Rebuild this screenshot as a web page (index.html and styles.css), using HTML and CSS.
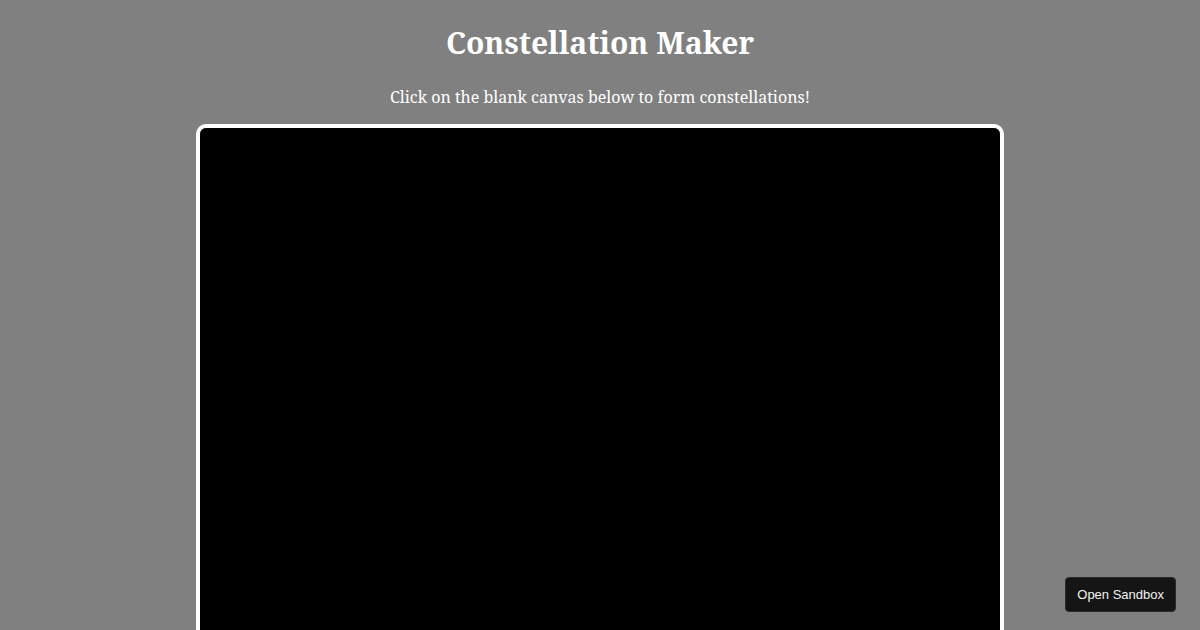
FILE: index.html
```html
<!DOCTYPE html>
<html lang="en">
<head>
    <meta charset="UTF-8">
    <meta name="viewport" content="width=device-width, initial-scale=1.0">
    <title>Constellation Maker</title>
    <link rel="stylesheet" href="styles.css">
</head>
<body>
    <h1>Constellation Maker</h1>
    <p>Click on the blank canvas below to form constellations!</p>
    <div class="board">
        <canvas id="sky" width="800" height="600"></canvas>
    </div>
    <a class="sandbox-btn" href="#">Open Sandbox</a>
    <script>
        const sky = document.getElementById('sky');
        const ctx = sky.getContext('2d');
        let lastStar = null;

        ctx.fillStyle = '#000';
        ctx.fillRect(0, 0, sky.width, sky.height);

        sky.addEventListener('click', function (e) {
            const rect = sky.getBoundingClientRect();
            const x = e.clientX - rect.left;
            const y = e.clientY - rect.top;

            if (lastStar) {
                ctx.strokeStyle = 'rgba(255, 255, 255, 0.6)';
                ctx.beginPath();
                ctx.moveTo(lastStar.x, lastStar.y);
                ctx.lineTo(x, y);
                ctx.stroke();
            }

            ctx.fillStyle = '#fff';
            ctx.beginPath();
            ctx.arc(x, y, 3, 0, Math.PI * 2);
            ctx.fill();
            lastStar = { x: x, y: y };
        });
    </script>
</body>
</html>
```

FILE: styles.css
```css
body {
    background-color: #808080;
    font-family: 'Noto Serif', 'DejaVu Serif', serif;
    color: white;
    text-align: center;
    margin: 8px;
}
h1 {
    font-size: 30px;
    margin: 14px 0 23px;
}
p {
    font-size: 16px;
    margin: 16px 0 16px;
}
.board {
    display: inline-block;
    border: 4px solid white;
    border-radius: 10px;
    overflow: hidden;
    line-height: 0;
}
canvas {
    display: block;
    background: black;
}
.sandbox-btn {
    position: fixed;
    right: 24px;
    bottom: 18px;
    padding: 9px 11px 8px;
    background: #151515;
    border: 1px solid #2a2a2a;
    border-radius: 4px;
    color: #f2f2f2;
    font-family: 'Liberation Sans', Arial, sans-serif;
    font-size: 13px;
    line-height: 16px;
    text-decoration: none;
}
```
